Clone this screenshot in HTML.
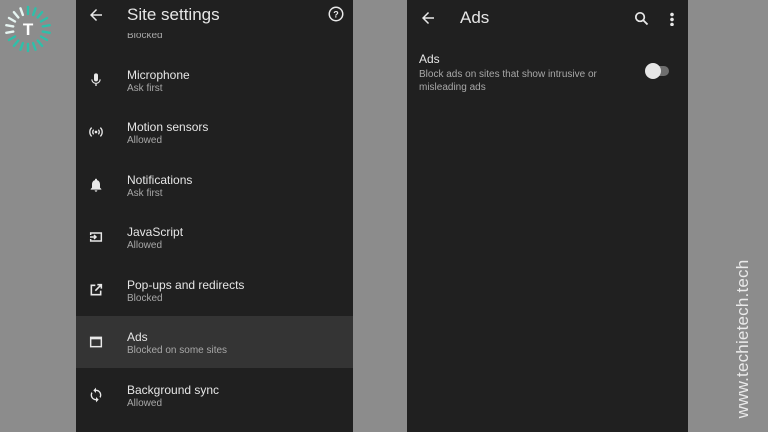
<!DOCTYPE html>
<html><head><meta charset="utf-8"><style>
*{margin:0;padding:0;box-sizing:border-box}
body{width:768px;height:432px;background:#8c8c8c;position:relative;overflow:hidden;font-family:"Liberation Sans",Roboto,sans-serif;color:#e8e8e8}
.panel{position:absolute;top:0;height:432px;background:#202020}
.t{position:absolute;font-size:12px;color:#e6e6e6;white-space:nowrap}
.s{position:absolute;font-size:10px;color:#a8a8a8;white-space:nowrap}
.ic{position:absolute;left:88px;width:16px;height:16px}
</style></head><body>
<svg style="position:absolute;left:0;top:1px" width="56" height="56" viewBox="-28 -28 56 56">
<g stroke-width="2.4" stroke-linecap="round">
<g stroke="#2fbfa9">
<line x1="0" y1="-22" x2="0" y2="-15" transform="rotate(0)"/>
<line x1="0" y1="-22" x2="0" y2="-15" transform="rotate(20)"/>
<line x1="0" y1="-22" x2="0" y2="-15" transform="rotate(40)"/>
<line x1="0" y1="-22" x2="0" y2="-15" transform="rotate(60)"/>
<line x1="0" y1="-22" x2="0" y2="-15" transform="rotate(80)"/>
<line x1="0" y1="-22" x2="0" y2="-15" transform="rotate(100)"/>
<line x1="0" y1="-22" x2="0" y2="-15" transform="rotate(120)"/>
<line x1="0" y1="-22" x2="0" y2="-15" transform="rotate(140)"/>
<line x1="0" y1="-22" x2="0" y2="-15" transform="rotate(160)"/>
<line x1="0" y1="-22" x2="0" y2="-15" transform="rotate(180)"/>
<line x1="0" y1="-22" x2="0" y2="-15" transform="rotate(200)"/>
<line x1="0" y1="-22" x2="0" y2="-15" transform="rotate(220)"/>
<line x1="0" y1="-22" x2="0" y2="-15" transform="rotate(240)"/>
</g>
<g stroke="#e6f4f1">
<line x1="0" y1="-22" x2="0" y2="-15" transform="rotate(260)"/>
<line x1="0" y1="-22" x2="0" y2="-15" transform="rotate(280)"/>
<line x1="0" y1="-22" x2="0" y2="-15" transform="rotate(300)"/>
<line x1="0" y1="-22" x2="0" y2="-15" transform="rotate(320)"/>
<line x1="0" y1="-22" x2="0" y2="-15" transform="rotate(340)"/>
</g></g>
<text x="0" y="6" text-anchor="middle" font-family="Liberation Sans" font-weight="bold" font-size="17" fill="#fff">T</text>
</svg>

<div class="panel" style="left:76px;width:277px"></div>
<div style="position:absolute;left:76px;top:316px;width:277px;height:52px;background:#343434"></div>
<svg style="position:absolute;left:87px;top:6px" width="18" height="18" viewBox="0 0 24 24"><path d="M20 11H7.8l5.6-5.6L12 4l-8 8 8 8 1.4-1.4L7.8 13H20z" fill="#e8e8e8"/></svg>
<div class="t" style="left:127px;top:5px;font-size:17px">Site settings</div>
<svg style="position:absolute;left:327px;top:5px" width="18" height="18" viewBox="0 0 24 24"><circle cx="12" cy="12" r="9" fill="none" stroke="#e8e8e8" stroke-width="2"/><text x="12" y="16.5" text-anchor="middle" font-family="Liberation Sans" font-weight="bold" font-size="12" fill="#e8e8e8">?</text></svg>
<div class="s" style="left:127px;top:30px;height:12px;overflow:hidden;clip-path:inset(3px 0 0 0)">Blocked</div>

<svg class="ic" style="top:72px" viewBox="0 0 24 24"><path d="M12 14a3 3 0 0 0 3-3V5a3 3 0 0 0-6 0v6a3 3 0 0 0 3 3zm5.3-3c0 3-2.5 5.1-5.3 5.1S6.7 14 6.7 11H5c0 3.4 2.7 6.2 6 6.7V21h2v-3.3c3.3-.5 6-3.3 6-6.7z" fill="#e8e8e8"/></svg>
<div class="t" style="left:127px;top:68px">Microphone</div><div class="s" style="left:127px;top:83px">Ask first</div>

<svg class="ic" style="top:124px" viewBox="0 0 24 24"><circle cx="12" cy="12" r="2" fill="#e8e8e8"/><path d="M8.5 8.5a5 5 0 0 0 0 7M15.5 8.5a5 5 0 0 1 0 7M5.5 5.5a9 9 0 0 0 0 13M18.5 5.5a9 9 0 0 1 0 13" fill="none" stroke="#e8e8e8" stroke-width="2"/></svg>
<div class="t" style="left:127px;top:120px">Motion sensors</div><div class="s" style="left:127px;top:135px">Allowed</div>

<svg class="ic" style="top:177px" viewBox="0 0 24 24"><path d="M12 22c1.1 0 2-.9 2-2h-4c0 1.1.9 2 2 2zm6-6v-5c0-3.1-1.6-5.6-4.5-6.3V4c0-.8-.7-1.5-1.5-1.5s-1.5.7-1.5 1.5v.7C7.6 5.4 6 7.9 6 11v5l-2 2v1h16v-1z" fill="#e8e8e8"/></svg>
<div class="t" style="left:127px;top:173px">Notifications</div><div class="s" style="left:127px;top:188px">Ask first</div>

<svg class="ic" style="top:229px" viewBox="0 0 24 24"><path d="M4 9V6h16v12H4v-3M3 12h9M9 9l3 3-3 3" fill="none" stroke="#e8e8e8" stroke-width="2.2"/></svg>
<div class="t" style="left:127px;top:225px">JavaScript</div><div class="s" style="left:127px;top:240px">Allowed</div>

<svg class="ic" style="top:282px" viewBox="0 0 24 24"><path d="M11 5H5v14h14v-6M14 4h6v6M20 4l-9 9" fill="none" stroke="#e8e8e8" stroke-width="2.4"/></svg>
<div class="t" style="left:127px;top:278px">Pop-ups and redirects</div><div class="s" style="left:127px;top:293px">Blocked</div>

<svg class="ic" style="top:334px" viewBox="0 0 24 24"><rect x="4" y="5" width="16" height="14" fill="none" stroke="#e8e8e8" stroke-width="2.2"/><rect x="4" y="5" width="16" height="3" fill="#e8e8e8"/></svg>
<div class="t" style="left:127px;top:330px">Ads</div><div class="s" style="left:127px;top:345px">Blocked on some sites</div>

<svg class="ic" style="top:387px" viewBox="0 0 24 24"><path d="M12 4V1L8 5l4 4V6c3.3 0 6 2.7 6 6 0 1-.3 2-.7 2.8l1.5 1.5C19.5 15 20 13.6 20 12c0-4.4-3.6-8-8-8zm0 14c-3.3 0-6-2.7-6-6 0-1 .3-2 .7-2.8L5.2 7.7C4.5 9 4 10.4 4 12c0 4.4 3.6 8 8 8v3l4-4-4-4z" fill="#e8e8e8"/></svg>
<div class="t" style="left:127px;top:383px">Background sync</div><div class="s" style="left:127px;top:398px">Allowed</div>

<div class="panel" style="left:407px;width:281px"></div>
<svg style="position:absolute;left:419px;top:9px" width="18" height="18" viewBox="0 0 24 24"><path d="M20 11H7.8l5.6-5.6L12 4l-8 8 8 8 1.4-1.4L7.8 13H20z" fill="#e8e8e8"/></svg>
<div class="t" style="left:460px;top:8px;font-size:17px">Ads</div>
<svg style="position:absolute;left:633px;top:10px" width="17" height="17" viewBox="0 0 24 24"><circle cx="10" cy="10" r="6" fill="none" stroke="#e8e8e8" stroke-width="2.4"/><path d="M14.5 14.5l6 6" stroke="#e8e8e8" stroke-width="2.6"/></svg>
<div style="position:absolute;left:670px;top:12px;width:4px;height:14px;background:radial-gradient(circle,#e8e8e8 1.6px,transparent 2px) 0 0/4px 5px"></div>
<div class="t" style="left:419px;top:52px">Ads</div>
<div class="s" style="left:419px;top:68px;line-height:13px">Block ads on sites that show intrusive or<br>misleading ads</div>
<div style="position:absolute;left:647px;top:66px;width:22px;height:10px;border-radius:5px;background:#6e6e6e"></div>
<div style="position:absolute;left:645px;top:63px;width:16px;height:16px;border-radius:50%;background:#e6e6e6"></div>

<div style="position:absolute;left:743px;top:339px;transform:translate(-50%,-50%) rotate(-90deg);font-size:17px;color:#eaeaea;white-space:nowrap;letter-spacing:0.2px">www.techietech.tech</div>
</body></html>
